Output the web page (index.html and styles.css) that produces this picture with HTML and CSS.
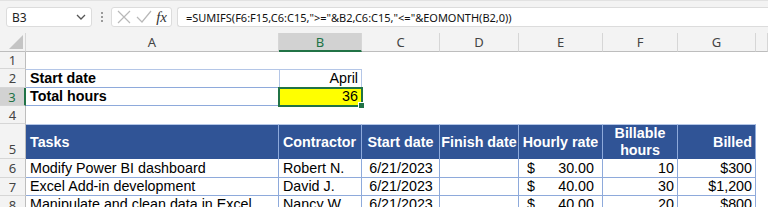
FILE: index.html
```html
<!DOCTYPE html>
<html lang="en">
<head>
    <meta charset="UTF-8">
    <title>Billable hours</title>
    <link rel="stylesheet" href="styles.css">
</head>
<body>

    <!-- Formula bar -->
    <div class="toolbar">
        <div class="namebox">
            <span>B3</span>
            <svg width="10" height="6" viewBox="0 0 10 6"><path d="M1 1 L5 5 L9 1" fill="none" stroke="#555" stroke-width="1.3"/></svg>
        </div>
        <div class="grip"><i></i><i></i><i></i></div>
        <div class="fxbox">
            <svg width="14" height="14" viewBox="0 0 14 14"><path d="M1 1 L13 13 M13 1 L1 13" stroke="#b8b8b8" stroke-width="1.2"/></svg>
            <svg width="16" height="14" viewBox="0 0 16 14"><path d="M1 7 L6 12 L15 1" fill="none" stroke="#b8b8b8" stroke-width="1.2"/></svg>
            <span class="fx">fx</span>
        </div>
        <div class="formula">=SUMIFS(F6:F15,C6:C15,"&gt;="&amp;B2,C6:C15,"&lt;="&amp;EOMONTH(B2,0))</div>
    </div>

    <!-- Sheet -->
    <div class="sheet">
        <div class="ch corner">
            <svg width="14" height="14" viewBox="0 0 14 14"><path d="M14 0 L14 14 L0 14 Z" fill="#c4c4c4"/></svg>
        </div>
        <div class="ch">A</div>
        <div class="ch sel-col">B</div>
        <div class="ch">C</div>
        <div class="ch">D</div>
        <div class="ch">E</div>
        <div class="ch">F</div>
        <div class="ch">G</div>
        <div class="ch"></div>

        <!-- row 1 -->
        <div class="rh">1</div>
        <div class="c"></div><div class="c"></div><div class="c"></div><div class="c"></div>
        <div class="c"></div><div class="c"></div><div class="c"></div><div class="c"></div>

        <!-- row 2 -->
        <div class="rh">2</div>
        <div class="c box top bold">Start date</div>
        <div class="c box top edge num">April</div>
        <div class="c"></div><div class="c"></div><div class="c"></div>
        <div class="c"></div><div class="c"></div><div class="c"></div>

        <!-- row 3 -->
        <div class="rh sel-row">3</div>
        <div class="c box bold">Total hours</div>
        <div class="c box edge num active">36<span class="handle"></span></div>
        <div class="c"></div><div class="c"></div><div class="c"></div>
        <div class="c"></div><div class="c"></div><div class="c"></div>

        <!-- row 4 -->
        <div class="rh">4</div>
        <div class="c"></div><div class="c"></div><div class="c"></div><div class="c"></div>
        <div class="c"></div><div class="c"></div><div class="c"></div><div class="c"></div>

        <!-- row 5: table header -->
        <div class="rh tall">5</div>
        <div class="th">Tasks</div>
        <div class="th">Contractor</div>
        <div class="th center">Start date</div>
        <div class="th center">Finish date</div>
        <div class="th center">Hourly rate</div>
        <div class="th center">Billable<br>hours</div>
        <div class="th right">Billed</div>
        <div class="c"></div>

        <!-- row 6 -->
        <div class="rh">6</div>
        <div class="td">Modify Power BI dashboard</div>
        <div class="td">Robert N.</div>
        <div class="td center">6/21/2023</div>
        <div class="td"></div>
        <div class="td acct"><span>$</span><span>30.00</span></div>
        <div class="td num">10</div>
        <div class="td num">$300</div>
        <div class="c"></div>

        <!-- row 7 -->
        <div class="rh">7</div>
        <div class="td">Excel Add-in development</div>
        <div class="td">David J.</div>
        <div class="td center">6/21/2023</div>
        <div class="td"></div>
        <div class="td acct"><span>$</span><span>40.00</span></div>
        <div class="td num">30</div>
        <div class="td num">$1,200</div>
        <div class="c"></div>

        <!-- row 8 -->
        <div class="rh">8</div>
        <div class="td">Manipulate and clean data in Excel</div>
        <div class="td">Nancy W.</div>
        <div class="td center">6/21/2023</div>
        <div class="td"></div>
        <div class="td acct"><span>$</span><span>40.00</span></div>
        <div class="td num">20</div>
        <div class="td num">$800</div>
        <div class="c"></div>
    </div>

</body>
</html>
```

FILE: styles.css
```css
/* Page */
body {
    margin: 0;
    width: 768px;
    height: 207px;
    overflow: hidden;
    background: #fff;
    font-family: "Liberation Sans", Arial, sans-serif;
}

/* Formula bar */
.toolbar {
    height: 33px;
    box-sizing: border-box;
    background: #f3f3f3;
    border-top: 1px solid #e2e2e2;
    display: flex;
    align-items: center;
    padding-left: 6px;
    font-family: "Noto Sans", "Open Sans", sans-serif;
    font-size: 12px;
    color: #222;
}

.namebox,
.fxbox,
.formula {
    height: 20px;
    box-sizing: border-box;
    background: #fff;
    border: 1px solid #dcdcdc;
    border-radius: 3px;
    display: flex;
    align-items: center;
}

.namebox {
    width: 86px;
    padding: 0 5px 0 5px;
    justify-content: space-between;
}

.grip {
    width: 19px;
    display: flex;
    flex-direction: column;
    align-items: center;
    gap: 2px;
}

.grip i {
    width: 2px;
    height: 2px;
    background: #9a9a9a;
}

.fxbox {
    width: 61px;
    padding: 0 4px 0 5px;
    justify-content: space-between;
}

.fx {
    font-family: "Liberation Serif", "DejaVu Serif", serif;
    font-style: italic;
    font-size: 15px;
    color: #333;
}

.formula {
    flex: 1;
    margin-left: 5px;
    padding-left: 8px;
    border-right: none;
    border-radius: 3px 0 0 3px;
    white-space: nowrap;
    font-size: 11px;
    color: #111;
}

/* Grid of cells */
.sheet {
    display: grid;
    grid-template-columns: 26px 253px 83px 78px 79px 84px 75px 78px 1fr;
    grid-template-rows: 19px 17px 19px 18px 18px 35px 19px 18px 18px;
    font-size: 14.3px;
    color: #000;
}

.sheet > div {
    box-sizing: border-box;
    white-space: nowrap;
    overflow: hidden;
}

/* column / row headings */
.ch {
    background: #f3f3f3;
    border-right: 1px solid #d6d6d6;
    border-bottom: 1px solid #bdbdbd;
    font-family: "Noto Sans", "Open Sans", sans-serif;
    font-size: 13px;
    color: #444;
    display: flex;
    align-items: center;
    justify-content: center;
}

.corner {
    justify-content: flex-end;
    align-items: flex-end;
    padding: 0 2px 2px 0;
}

.rh {
    background: #f3f3f3;
    border-right: 1px solid #bdbdbd;
    border-bottom: 1px solid #d6d6d6;
    font-family: "Noto Sans", "Open Sans", sans-serif;
    font-size: 13px;
    color: #444;
    display: flex;
    align-items: center;
    justify-content: center;
}

.rh.tall {
    align-items: flex-end;
}

.sel-col {
    background: #d2d2d2;
    color: #217346;
    border-bottom: 2px solid #217346;
}

.sel-row {
    background: #d2d2d2;
    color: #217346;
    border-right: 2px solid #217346;
}

/* cells */
.c {
    display: flex;
    align-items: flex-end;
    padding: 0 3px 0 4px;
    line-height: 17px;
}

.box {
    border-bottom: 1px solid #8eaadb;
}

.box.top {
    border-top: 1px solid #b4c6e7;
}

.box.edge {
    border-left: 1px solid #b4c6e7;
    border-right: 1px solid #b4c6e7;
}

.bold {
    font-weight: bold;
}

.num {
    justify-content: flex-end;
}

.center {
    justify-content: center;
}

.right {
    justify-content: flex-end;
}

/* selected cell B3 */
.active {
    position: relative;
    overflow: visible !important;
    background: #ffff00;
    outline: 2px solid #217346;
    outline-offset: -1px;
}

.handle {
    position: absolute;
    right: -4px;
    bottom: -4px;
    width: 5px;
    height: 5px;
    background: #217346;
    border: 1px solid #fff;
}

/* table */
.th {
    background: #305496;
    color: #fff;
    font-weight: bold;
    border-right: 1px solid #8eaadb;
    border-top: 1px solid #b4c6e7;
    display: flex;
    align-items: center;
    padding: 0 4px;
    line-height: 17px;
    text-align: center;
}

.th.right {
    padding-right: 3px;
}

.td {
    display: flex;
    align-items: flex-end;
    padding: 0 3px 0 4px;
    line-height: 17px;
    border-right: 1px solid #8eaadb;
    border-bottom: 1px solid #8eaadb;
}

.acct {
    justify-content: space-between;
    padding: 0 8px 0 8px;
}
```
